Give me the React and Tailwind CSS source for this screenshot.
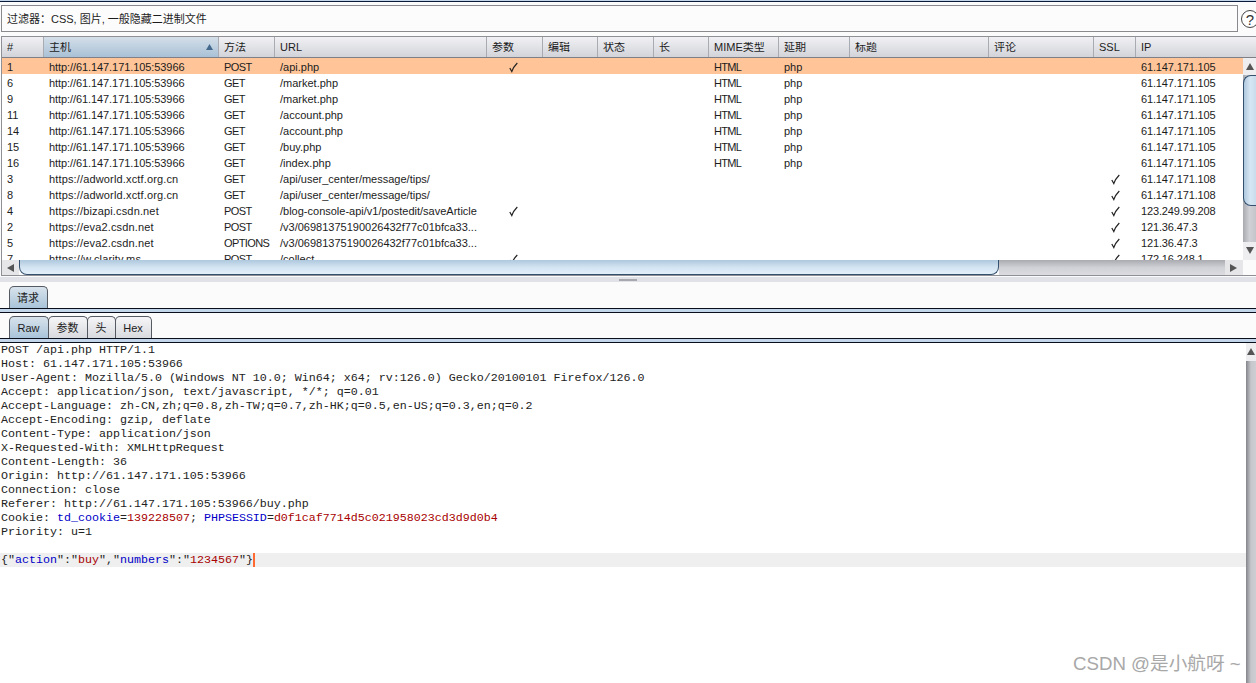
const columns = [
  { label: "#", w: "w-[42px]" },
  { label: "主机", w: "w-[175px]", active: true },
  { label: "方法", w: "w-[56px]" },
  { label: "URL", w: "w-[212px]" },
  { label: "参数", w: "w-[56px]" },
  { label: "编辑", w: "w-[55px]" },
  { label: "状态", w: "w-[56px]" },
  { label: "长", w: "w-[55px]" },
  { label: "MIME类型", w: "w-[70px]" },
  { label: "延期", w: "w-[71px]" },
  { label: "标题", w: "w-[139px]" },
  { label: "评论", w: "w-[105px]" },
  { label: "SSL", w: "w-[42px]" },
  { label: "IP", w: "w-[121px]" },
];

const H = "http://61.147.171.105:53966";
const rows = [
  ["1", H, "POST", "/api.php", true, "HTML", "php", false, "61.147.171.105"],
  ["6", H, "GET", "/market.php", false, "HTML", "php", false, "61.147.171.105"],
  ["9", H, "GET", "/market.php", false, "HTML", "php", false, "61.147.171.105"],
  ["11", H, "GET", "/account.php", false, "HTML", "php", false, "61.147.171.105"],
  ["14", H, "GET", "/account.php", false, "HTML", "php", false, "61.147.171.105"],
  ["15", H, "GET", "/buy.php", false, "HTML", "php", false, "61.147.171.105"],
  ["16", H, "GET", "/index.php", false, "HTML", "php", false, "61.147.171.105"],
  ["3", "https://adworld.xctf.org.cn", "GET", "/api/user_center/message/tips/", false, "", "", true, "61.147.171.108"],
  ["8", "https://adworld.xctf.org.cn", "GET", "/api/user_center/message/tips/", false, "", "", true, "61.147.171.108"],
  ["4", "https://bizapi.csdn.net", "POST", "/blog-console-api/v1/postedit/saveArticle", true, "", "", true, "123.249.99.208"],
  ["2", "https://eva2.csdn.net", "POST", "/v3/06981375190026432f77c01bfca33...", false, "", "", true, "121.36.47.3"],
  ["5", "https://eva2.csdn.net", "OPTIONS", "/v3/06981375190026432f77c01bfca33...", false, "", "", true, "121.36.47.3"],
  ["7", "https://w.clarity.ms", "POST", "/collect", true, "", "", true, "172.16.248.1"],
];

function Check() {
  return (
    <svg width="11" height="11" viewBox="0 0 11 11" className="block">
      <path d="M1.8 6 L3.8 9.5 Q5.3 5 9.3 1" fill="none" stroke="#222" strokeWidth="1.2" />
    </svg>
  );
}

function Arrow({ dir }) {
  const d = {
    up: "M0 7 L4 0 L8 7 Z",
    down: "M0 0 L8 0 L4 7 Z",
    left: "M7 0 L7 8 L0 4 Z",
    right: "M0 0 L0 8 L7 4 Z",
  }[dir];
  return (
    <svg width="8" height="8" viewBox="0 0 8 8" className="block">
      <path d={d} fill="#555" />
    </svg>
  );
}

function HeaderCell({ col }) {
  return (
    <div
      className={`${col.w} shrink-0 flex items-center pl-[5px] border-r border-[#a9abb3] last:border-r-0 ${
        col.active
          ? "bg-gradient-to-b from-[#d4dfe9] to-[#a9c1d6]"
          : "bg-gradient-to-b from-[#f1f1f4] to-[#d3d4da]"
      }`}
    >
      <span className="flex-1 truncate">{col.label}</span>
      {col.active && (
        <svg width="7" height="6" viewBox="0 0 7 6" className="mr-[5px]">
          <path d="M0 6 L3.5 0 L7 6 Z" fill="#44698c" />
        </svg>
      )}
    </div>
  );
}

function Row({ row, selected }) {
  const [id, host, method, url, params, mime, ext, ssl, ip] = row;
  const hostTracking = host.startsWith("https") ? "tracking-[0.15px]" : "tracking-[-0.08px]";
  return (
    <div className={`flex h-4 shrink-0 items-center pt-[2px] whitespace-nowrap ${selected ? "bg-[#ffc599]" : "bg-white"}`}>
      <div className="w-[42px] shrink-0 pl-[5px]">{id}</div>
      <div className={`w-[175px] shrink-0 pl-[5px] ${hostTracking}`}>{host}</div>
      <div className="w-[56px] shrink-0 pl-[5px] tracking-[-0.6px]">{method}</div>
      <div className="w-[212px] shrink-0 pl-[5px] overflow-hidden">{url}</div>
      <div className="w-[56px] shrink-0 flex justify-center pr-[3px]">{params && <Check />}</div>
      <div className="w-[166px] shrink-0" />
      <div className="w-[70px] shrink-0 pl-[5px] tracking-[-0.7px]">{mime}</div>
      <div className="w-[71px] shrink-0 pl-[5px]">{ext}</div>
      <div className="w-[244px] shrink-0" />
      <div className="w-[42px] shrink-0 flex justify-center">{ssl && <Check />}</div>
      <div className="flex-1 pl-[5px] tracking-[-0.14px]">{ip}</div>
    </div>
  );
}

function Tab({ label, active, w }) {
  return (
    <div
      className={`${w} h-[22px] shrink-0 flex items-center justify-center pt-[2px] pr-px border border-b-0 border-[#555a62] rounded-t-[5px] -mr-px ${
        active
          ? "bg-gradient-to-b from-[#d8e3ec] to-[#a9c3d9]"
          : "bg-gradient-to-b from-[#f6f6f8] to-[#d9dade]"
      }`}
    >
      {label}
    </div>
  );
}

function Divider() {
  return <div className="h-[5px] shrink-0 border-y border-[#0a0f1e] bg-[#c3d5e8]" />;
}

const blue = "text-[#0000c8]";
const red = "text-[#a80000]";

export default function App() {
  return (
    <div
      className="relative w-[1256px] h-[683px] overflow-hidden flex flex-col bg-[#fbfbfb] text-[11px] leading-none text-[#1c1c1c]"
      style={{ fontFamily: '"Liberation Sans", "Noto Sans CJK SC", sans-serif' }}
    >
      <div className="h-px shrink-0 bg-[#c3d5e8]" />
      <div className="h-px shrink-0 bg-[#0a1a38]" />

      {/* filter bar */}
      <div className="mt-[3px] h-[27px] shrink-0 flex pl-px">
        <div className="w-[1237px] shrink-0 border border-[#8a8a8e] bg-[#fcfcfc] flex items-center pl-[5px] pt-[2px]">
          过滤器：CSS, 图片, 一般隐藏二进制文件
        </div>
        <div className="ml-[3px] mt-[5px] w-[18px] h-[18px] shrink-0 rounded-full border border-[#444] bg-white flex items-center justify-center text-[15px] text-[#333]">
          ?
        </div>
      </div>

      {/* request table */}
      <div className="mt-[4px] ml-px h-[240px] shrink-0 flex flex-col border-y border-l border-[#8f9096]">
        <div className="flex h-[21px] shrink-0 border-b border-[#7f8087]">
          {columns.map((c) => (
            <HeaderCell key={c.label} col={c} />
          ))}
        </div>
        <div className="flex h-[202px] shrink-0">
          <div className="w-[1241px] shrink-0 flex flex-col overflow-hidden bg-white">
            {rows.map((r, i) => (
              <Row key={r[0]} row={r} selected={i === 0} />
            ))}
          </div>
          <div className="flex-1 flex flex-col bg-gradient-to-r from-[#a9aab0] via-[#d0d1d6] to-[#c4c5cb]">
            <div className="h-[17px] shrink-0 bg-[#eeeef0] flex items-center justify-center">
              <Arrow dir="up" />
            </div>
            <div className="h-[131px] shrink-0 rounded-l-[8px] border-y border-l border-[#34506e] bg-gradient-to-r from-[#aec8de] via-[#d6e6f3] to-[#c9dceb]" />
            <div className="flex-1" />
            <div className="h-[18px] shrink-0 bg-[#eeeef0] flex items-center justify-center">
              <Arrow dir="down" />
            </div>
          </div>
        </div>
        <div className="flex h-[15px] shrink-0">
          <div className="w-[17px] shrink-0 bg-[#e6e6e9] flex items-center justify-center">
            <Arrow dir="left" />
          </div>
          <div className="w-[980px] shrink-0 rounded-b-[8px] border-x border-b border-[#34506e] bg-gradient-to-b from-[#aec8de] via-[#d2e3f1] to-[#e3f0fa]" />
          <div className="w-[226px] shrink-0 bg-gradient-to-b from-[#aaabb1] via-[#d0d1d6] to-[#dcdce0]" />
          <div className="w-[18px] shrink-0 bg-[#e6e6e9] flex items-center justify-center">
            <Arrow dir="right" />
          </div>
          <div className="flex-1 bg-[#fbfbfb]" />
        </div>
      </div>

      {/* splitter */}
      <div className="mt-px h-[5px] shrink-0 bg-[#e1e2e7] flex justify-center items-start">
        <div className="mt-[2px] w-[18px] h-[2px] bg-[#a8a9ae]" />
      </div>

      {/* outer tabs */}
      <div className="h-[26px] shrink-0 flex items-end pl-[9px]">
        <Tab label="请求" active w="w-[39px]" />
      </div>
      <Divider />

      {/* inner tabs */}
      <div className="h-[25px] shrink-0 flex items-end pl-[9px]">
        <Tab label="Raw" active w="w-[40px]" />
        <Tab label="参数" w="w-[40px]" />
        <Tab label="头" w="w-[29px]" />
        <Tab label="Hex" w="w-[37px]" />
      </div>
      <Divider />

      {/* raw editor */}
      <div className="flex-1 flex min-h-0 bg-white">
        <div
          className="flex-1 pl-px text-[11.67px] leading-[14px] whitespace-pre text-[#222]"
          style={{ fontFamily: '"Liberation Mono", monospace' }}
        >
          <div>POST /api.php HTTP/1.1</div>
          <div>Host: 61.147.171.105:53966</div>
          <div>User-Agent: Mozilla/5.0 (Windows NT 10.0; Win64; x64; rv:126.0) Gecko/20100101 Firefox/126.0</div>
          <div>Accept: application/json, text/javascript, */*; q=0.01</div>
          <div>Accept-Language: zh-CN,zh;q=0.8,zh-TW;q=0.7,zh-HK;q=0.5,en-US;q=0.3,en;q=0.2</div>
          <div>Accept-Encoding: gzip, deflate</div>
          <div>Content-Type: application/json</div>
          <div>X-Requested-With: XMLHttpRequest</div>
          <div>Content-Length: 36</div>
          <div>Origin: http://61.147.171.105:53966</div>
          <div>Connection: close</div>
          <div>Referer: http://61.147.171.105:53966/buy.php</div>
          <div>
            Cookie: <span className={blue}>td_cookie</span>=<span className={red}>139228507</span>;{" "}
            <span className={blue}>PHPSESSID</span>=<span className={red}>d0f1caf7714d5c021958023cd3d9d0b4</span>
          </div>
          <div>Priority: u=1</div>
          <div className="h-[14px]" />
          <div className="-ml-px pl-px bg-[#efefef] flex h-[14px]">
            <span>
              {"{"}"<span className={blue}>action</span>":"<span className={red}>buy</span>","
              <span className={blue}>numbers</span>":"<span className={red}>1234567</span>"{"}"}
            </span>
            <span className="w-[2px] h-[14px] bg-[#ff6a33]" />
          </div>
        </div>
        <div className="w-[10px] shrink-0 flex flex-col bg-gradient-to-r from-[#85868c] via-[#c6c7cd] to-[#cdced3]">
          <div className="h-[18px] shrink-0 bg-[#eeeef0] flex items-center justify-center">
            <Arrow dir="up" />
          </div>
        </div>
      </div>

      {/* watermark */}
      <div className="absolute left-[1073px] top-[654px] text-[18.67px] leading-5 text-[#a8a8a8] whitespace-nowrap">
        CSDN @是小航呀 ~
      </div>
    </div>
  );
}
